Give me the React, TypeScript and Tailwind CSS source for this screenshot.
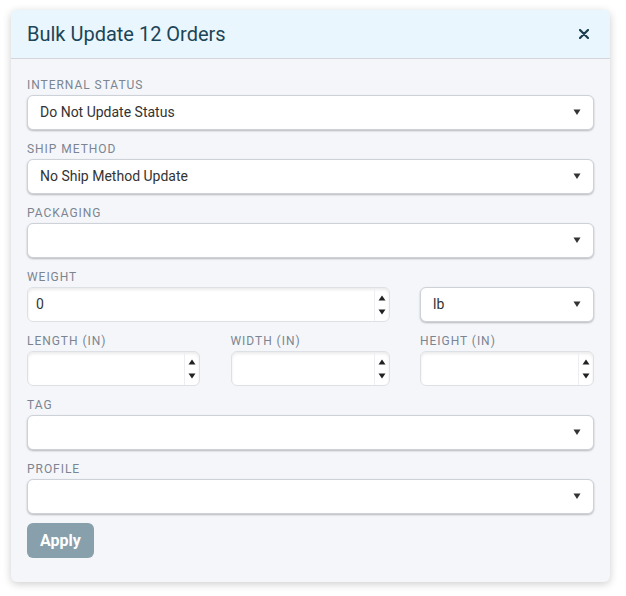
import type { ReactNode } from "react";

function Caret() {
  return (
    <svg width="8" height="7" viewBox="0 0 8 7" className="shrink-0">
      <path d="M0.5 0.5h7L4 6z" fill="#333" />
    </svg>
  );
}

function Field({ label, children, className = "" }: { label: string; children: ReactNode; className?: string }) {
  return (
    <div className={"flex flex-col " + className}>
      <label className="mb-[2px] text-[12px] leading-4 tracking-[0.08em] text-[#7b8591] uppercase">{label}</label>
      {children}
    </div>
  );
}

function Select({ value = "" }: { value?: string }) {
  return (
    <div className="flex h-[35px] items-center justify-between rounded-[6px] border border-[#cdd2d8] bg-white pl-[12px] pr-[12px] shadow-[0_1px_2px_rgba(0,0,0,0.25)]">
      <span className="text-[14px] text-[#333]">{value}</span>
      <Caret />
    </div>
  );
}

function NumberInput({ value = "" }: { value?: string }) {
  return (
    <div className="flex h-[35px] items-stretch overflow-hidden rounded-[6px] border border-[#dde0e5] bg-white shadow-[inset_0_2px_3px_rgba(0,0,0,0.08)]">
      <span className="flex flex-1 items-center pl-[8px] text-[14px] text-[#333]">{value}</span>
      <div className="flex w-[15px] flex-col items-center justify-center gap-[8px] border-l border-[#eceef1]">
        <svg width="8" height="6" viewBox="0 0 8 6">
          <path d="M4 0.5L7.5 5.5h-7z" fill="#222" />
        </svg>
        <svg width="8" height="6" viewBox="0 0 8 6">
          <path d="M0.5 0.5h7L4 5.5z" fill="#222" />
        </svg>
      </div>
    </div>
  );
}

export default function App() {
  return (
    <div className="min-h-[596px] bg-white pl-[11px] pr-[16px] pt-[10px] font-['Roboto',sans-serif]">
      <div className="w-[599px] overflow-hidden rounded-[6px] bg-[#f5f6fa] shadow-[0_2px_8px_rgba(0,0,0,0.2)]">
        <header className="flex h-[49px] items-center justify-between border-b border-[#d3d7dc] bg-[#e9f6fd] pl-[16px] pr-[21px]">
          <h2 className="text-[20px] text-[#1b4558]">Bulk Update 12 Orders</h2>
          <svg width="10" height="10" viewBox="0 0 10 10">
            <path d="M1 1L9 9M9 1L1 9" stroke="#1a3d4f" strokeWidth="2.2" strokeLinecap="round" />
          </svg>
        </header>

        <div className="flex flex-col gap-[11px] px-[16px] pt-[18px] pb-[24px]">
          <Field label="Internal Status">
            <Select value="Do Not Update Status" />
          </Field>
          <Field label="Ship Method">
            <Select value="No Ship Method Update" />
          </Field>
          <Field label="Packaging">
            <Select />
          </Field>

          <div className="grid grid-cols-[173px_159px_174px] justify-between gap-y-[11px]">
            <Field label="Weight" className="col-span-2">
              <NumberInput value="0" />
            </Field>
            <div className="flex flex-col justify-end">
              <Select value="lb" />
            </div>
            <Field label="Length (in)">
              <NumberInput />
            </Field>
            <Field label="Width (in)">
              <NumberInput />
            </Field>
            <Field label="Height (in)">
              <NumberInput />
            </Field>
          </div>

          <Field label="Tag">
            <Select />
          </Field>
          <Field label="Profile">
            <Select />
          </Field>

          <div className="-mt-[2px]">
            <button className="h-[35px] w-[67px] rounded-[6px] bg-[#87a0ac] text-[16px] font-bold text-white">
              Apply
            </button>
          </div>
        </div>
      </div>
    </div>
  );
}
